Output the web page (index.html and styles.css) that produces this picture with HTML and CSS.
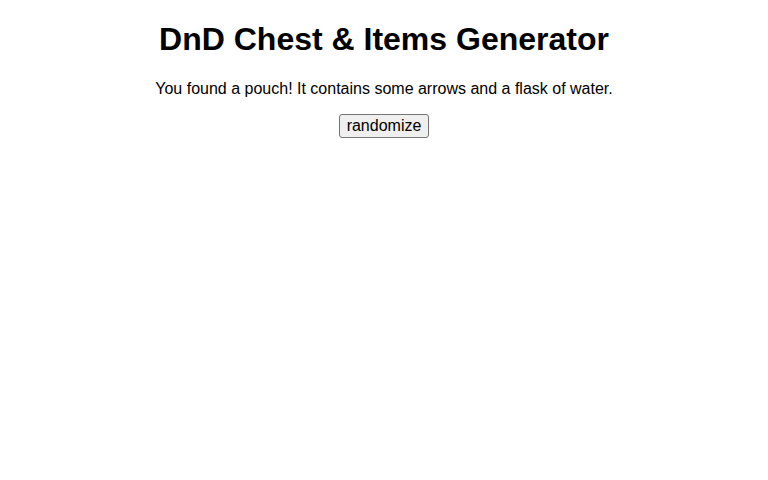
FILE: index.html
```html
<!DOCTYPE html>
<html lang="en">
<head>
<meta charset="utf-8">
<title>DnD Chest &amp; Items Generator</title>
<link rel="stylesheet" href="styles.css">
</head>
<body>
  <main class="generator">
    <h1 class="generator-title">DnD Chest &amp; Items Generator</h1>
    <p class="generator-result">You found a pouch! It contains some arrows and a flask of water.</p>
    <button class="generator-button" type="button">randomize</button>
  </main>
</body>
</html>
```
FILE: styles.css
```css
html, body {
  margin: 0;
  padding: 0;
  background: #ffffff;
}

body {
  font-family: "Liberation Sans", Arial, sans-serif;
  color: #000000;
}

.generator {
  padding: 21.44px 8px 0;
  text-align: center;
}

.generator-title {
  margin: 0 0 21.44px;
  font-size: 32px;
  font-weight: bold;
}

.generator-result {
  margin: 0 0 16px;
  font-size: 16px;
}

.generator-button {
  font-family: "Liberation Sans", Arial, sans-serif;
  font-size: 16px;
  line-height: 18px;
  color: #000000;
  background: #efefef;
  border: 1px solid #767676;
  border-radius: 3px;
  padding: 2px 7px;
}
```
